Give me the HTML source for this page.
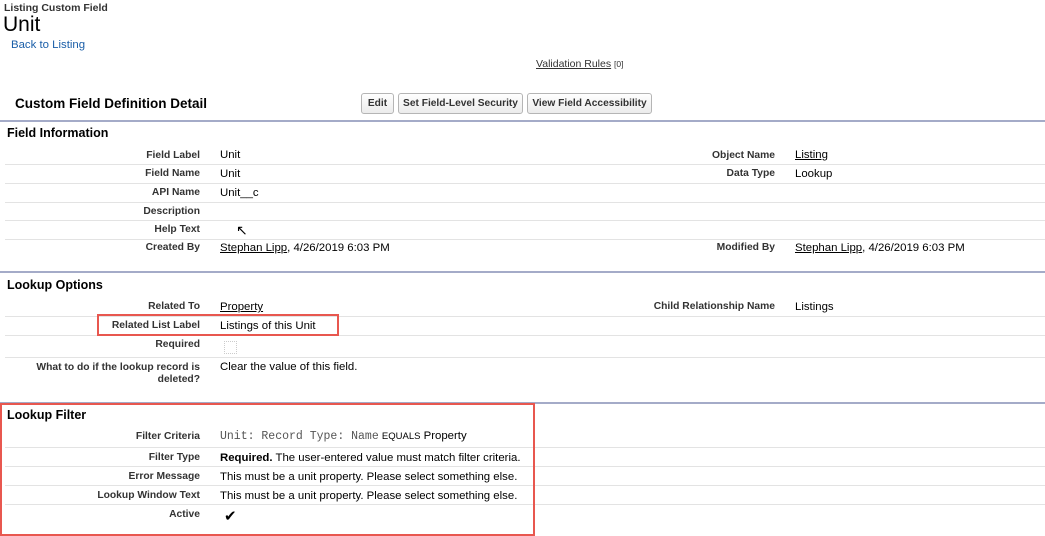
<!DOCTYPE html>
<html><head><meta charset="utf-8"><style>
body{margin:0;width:1045px;height:536px;background:#fff;font-family:"Liberation Sans",Arial,sans-serif;color:#000;position:relative;overflow:hidden}
.a{position:absolute;white-space:nowrap}
.l{position:absolute;font-size:10.3px;font-weight:bold;color:#333;text-align:right;white-space:nowrap}
.v{position:absolute;font-size:11.4px;white-space:nowrap}
.hr{position:absolute;left:5px;right:0;height:1px;background:#e3e3e3}
.sec{position:absolute;left:0;right:0;height:2px;background:#a4abc8}
.h{position:absolute;left:7px;font-size:12.5px;font-weight:bold}
.btn{position:absolute;top:93px;height:19px;border:1px solid #b5b5b5;border-radius:3px;background:linear-gradient(#fff,#ececec);font-size:10.2px;font-weight:bold;color:#333;line-height:19px;text-align:center;white-space:nowrap;overflow:hidden}
u{text-decoration:underline}
</style></head><body>
<div class="a" style="left:4px;top:2px;font-size:10.5px;font-weight:bold;color:#333">Listing Custom Field</div>
<div class="a" style="left:3px;top:13px;font-size:21px">Unit</div>
<div class="a" style="left:11px;top:39px;font-size:11.4px;color:#1a5ea8">Back to Listing</div>
<div class="a" style="left:536px;top:58px;font-size:10.5px;color:#333"><u>Validation Rules</u> <span style="font-size:8.5px">[0]</span></div>
<div class="a" style="left:15px;top:96px;font-size:13.5px;font-weight:bold">Custom Field Definition Detail</div>
<div class="btn" style="left:361px;width:31px">Edit</div>
<div class="btn" style="left:398px;width:123px">Set Field-Level Security</div>
<div class="btn" style="left:527px;width:123px">View Field Accessibility</div>
<div class="sec" style="top:120px"></div>
<div class="h" style="top:126px">Field Information</div>

<div class="l" style="right:845px;top:150px">Field Label</div><div class="v" style="left:220px;top:149px">Unit</div>
<div class="l" style="right:270px;top:150px">Object Name</div><div class="v" style="left:795px;top:149px"><u>Listing</u></div>
<div class="hr" style="top:164px"></div>
<div class="l" style="right:845px;top:168px">Field Name</div><div class="v" style="left:220px;top:168px">Unit</div>
<div class="l" style="right:270px;top:168px">Data Type</div><div class="v" style="left:795px;top:168px">Lookup</div>
<div class="hr" style="top:183px"></div>
<div class="l" style="right:845px;top:187px">API Name</div><div class="v" style="left:220px;top:187px">Unit__c</div>
<div class="hr" style="top:202px"></div>
<div class="l" style="right:845px;top:206px">Description</div>
<div class="hr" style="top:220px"></div>
<div class="l" style="right:845px;top:224px">Help Text</div>
<div class="a" style="left:236px;top:222px;font-size:14px">&#x2196;</div>
<div class="hr" style="top:239px"></div>
<div class="l" style="right:845px;top:242px">Created By</div><div class="v" style="left:220px;top:242px"><u>Stephan Lipp</u>, 4/26/2019 6:03 PM</div>
<div class="l" style="right:270px;top:242px">Modified By</div><div class="v" style="left:795px;top:242px"><u>Stephan Lipp</u>, 4/26/2019 6:03 PM</div>

<div class="sec" style="top:271px"></div>
<div class="h" style="top:278px">Lookup Options</div>
<div class="l" style="right:845px;top:301px">Related To</div><div class="v" style="left:220px;top:301px"><u>Property</u></div>
<div class="l" style="right:270px;top:301px">Child Relationship Name</div><div class="v" style="left:795px;top:301px">Listings</div>
<div class="hr" style="top:316px"></div>
<div class="l" style="right:845px;top:320px">Related List Label</div><div class="v" style="left:220px;top:320px">Listings of this Unit</div>
<div class="hr" style="top:335px"></div>
<div class="l" style="right:845px;top:339px">Required</div>
<div class="a" style="left:224px;top:341px;width:11px;height:11px;border:1px dotted #ccc"></div>
<div class="hr" style="top:357px"></div>
<div class="l" style="right:845px;top:362px;line-height:12px">What to do if the lookup record is<br>deleted?</div>
<div class="v" style="left:220px;top:361px">Clear the value of this field.</div>
<div style="position:absolute;left:97px;top:314px;width:238px;height:18px;border:2px solid #e8574f"></div>

<div class="sec" style="top:402px"></div>
<div class="h" style="top:408px">Lookup Filter</div>
<div class="l" style="right:845px;top:431px">Filter Criteria</div>
<div class="v" style="left:220px;top:430px"><span style="font-family:'Liberation Mono',monospace;color:#555;font-size:11.5px">Unit: Record Type: Name</span> <span style="font-size:9.5px">EQUALS</span> Property</div>
<div class="hr" style="top:447px"></div>
<div class="l" style="right:845px;top:452px">Filter Type</div><div class="v" style="left:220px;top:452px"><b>Required.</b> The user-entered value must match filter criteria.</div>
<div class="hr" style="top:466px"></div>
<div class="l" style="right:845px;top:471px">Error Message</div><div class="v" style="left:220px;top:471px">This must be a unit property. Please select something else.</div>
<div class="hr" style="top:485px"></div>
<div class="l" style="right:845px;top:490px">Lookup Window Text</div><div class="v" style="left:220px;top:490px">This must be a unit property. Please select something else.</div>
<div class="hr" style="top:504px"></div>
<div class="l" style="right:845px;top:509px">Active</div>
<div class="a" style="left:224px;top:507px;font-size:15px">&#x2714;</div>
<div style="position:absolute;left:0;top:403px;width:531px;height:129px;border:2px solid #e8574f"></div>
</body></html>
